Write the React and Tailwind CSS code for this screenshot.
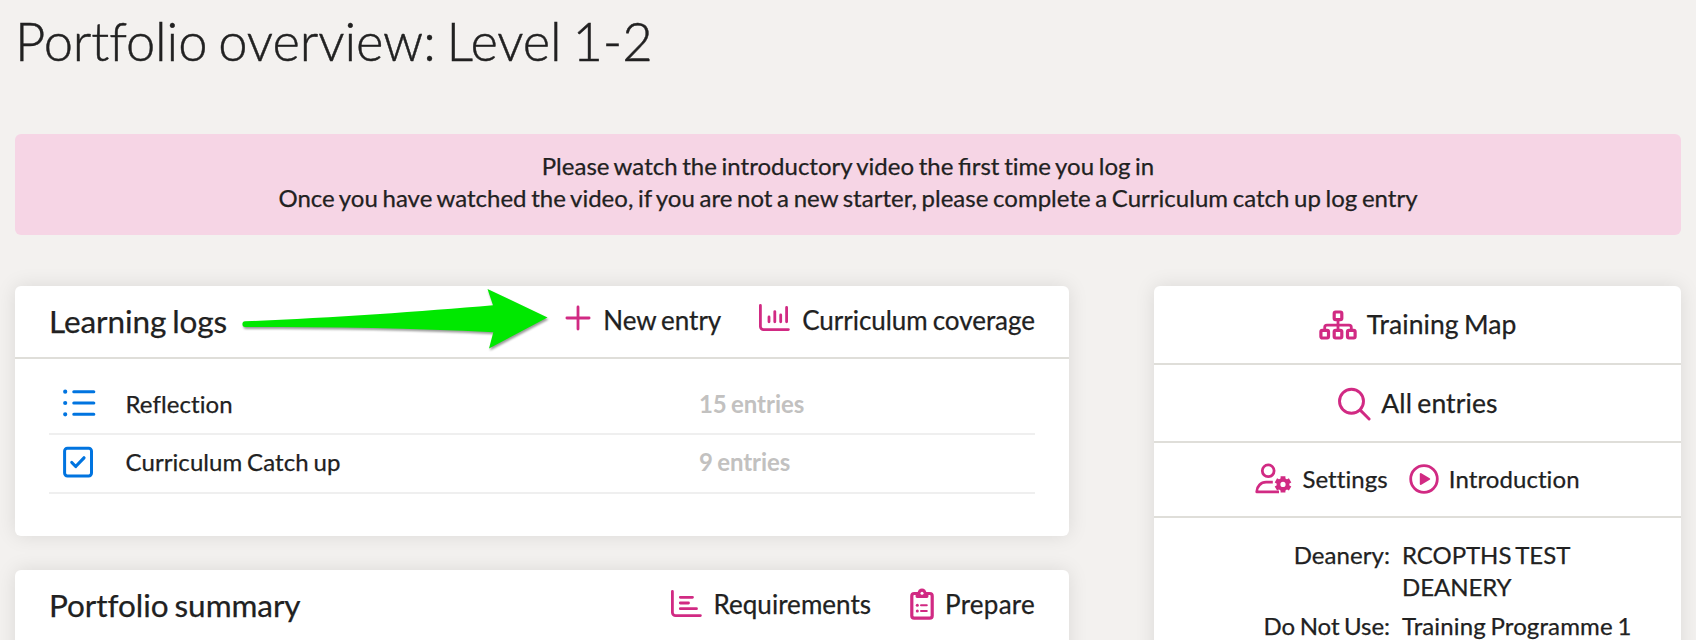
const stroke = {
  fill: "none",
  stroke: "currentColor",
  strokeWidth: 2.8,
  strokeLinecap: "round",
  strokeLinejoin: "round",
};

function PlusIcon() {
  return (
    <svg width="26" height="26" viewBox="0 0 26 26" {...stroke}>
      <path d="M13 1.9v22.2M1.9 13h22.2" />
    </svg>
  );
}

function BarsIcon() {
  return (
    <svg width="31" height="28" viewBox="0 0 31 28" {...stroke}>
      <path d="M1.4 1.4v21a3.2 3.2 0 0 0 3.2 3.2h24.8M10 13v4.8M15.8 7.6v10.2M21.7 11v6.8M27.6 3.4v14.4" />
    </svg>
  );
}

function ReportIcon() {
  return (
    <svg width="31" height="28" viewBox="0 0 31 28" {...stroke}>
      <path d="M1.4 1.4v21a3.2 3.2 0 0 0 3.2 3.2h24.8M9.3 7.3h12.2M9.3 13h8.2M9.3 18.7h16.2" />
    </svg>
  );
}

function ClipboardIcon() {
  return (
    <svg width="24" height="32" viewBox="0 0 24 32" {...stroke}>
      <rect x="1.8" y="5.5" width="20.4" height="24.6" rx="2.4" strokeWidth="3.2" />
      <path
        d="M5.6 5H18.4v3.6a1.4 1.4 0 0 1-1.4 1.4H7A1.4 1.4 0 0 1 5.6 8.6z"
        fill="currentColor"
        stroke="none"
      />
      <circle cx="12" cy="4.8" r="4.4" fill="currentColor" stroke="none" />
      <circle cx="12" cy="5.2" r="1.5" fill="#fff" stroke="none" />
      <path d="M11 17.2h5.8M11 22.9h5.8" strokeWidth="2" />
      <circle cx="7.3" cy="17.2" r="1.5" fill="currentColor" stroke="none" />
      <circle cx="7.3" cy="22.9" r="1.5" fill="currentColor" stroke="none" />
    </svg>
  );
}

function SitemapIcon() {
  return (
    <svg width="38" height="30" viewBox="0 0 38 30" {...stroke} strokeWidth="3.2">
      <rect x="15.2" y="2" width="7.6" height="7.6" rx="1.4" />
      <rect x="1.9" y="20.4" width="7.6" height="7.6" rx="1.4" />
      <rect x="15.2" y="20.4" width="7.6" height="7.6" rx="1.4" />
      <rect x="28.5" y="20.4" width="7.6" height="7.6" rx="1.4" />
      <path d="M19 10v10M5.7 20v-2.6a2.2 2.2 0 0 1 2.2-2.2h22.2a2.2 2.2 0 0 1 2.2 2.2V20" strokeWidth="2.8" />
    </svg>
  );
}

function SearchIcon() {
  return (
    <svg width="34" height="34" viewBox="0 0 34 34" {...stroke} strokeWidth="2.9">
      <circle cx="14.5" cy="14.3" r="12" />
      <path d="M23.5 23.4l8.6 8.6" />
    </svg>
  );
}

function UserGearIcon() {
  return (
    <svg width="37" height="31" viewBox="0 0 37 31" {...stroke}>
      <circle cx="13.2" cy="7.8" r="5.9" />
      <path d="M17.8 19.2H11.3a9.3 9.3 0 0 0-9.5 9.7H24" strokeLinecap="butt" />
      <path d="M28 13.2v16.4M20.9 17.3l14.2 8.2M35.1 17.3l-14.2 8.2" strokeWidth="4.8" strokeLinecap="butt" />
      <circle cx="28" cy="21.4" r="4.5" strokeWidth="3.8" fill="#fff" />
    </svg>
  );
}

function PlayIcon() {
  return (
    <svg width="30" height="30" viewBox="0 0 30 30" {...stroke}>
      <circle cx="15" cy="15" r="13.3" />
      <path d="M11.8 10.1v9.8L20.2 15z" fill="currentColor" strokeWidth="2" />
    </svg>
  );
}

function ListIcon() {
  return (
    <svg width="33" height="28" viewBox="0 0 33 28" {...stroke} strokeWidth="3.1">
      <path d="M10.8 2.7h20M10.8 14h20M10.8 25.3h20" />
      <path d="M2.2 2.7h.01M2.2 14h.01M2.2 25.3h.01" strokeWidth="4.2" />
    </svg>
  );
}

function CheckBoxIcon() {
  return (
    <svg width="30" height="32" viewBox="0 0 30 32" {...stroke} strokeWidth="3">
      <rect x="1.6" y="2.2" width="26.9" height="27.7" rx="2.8" />
      <path d="M8.8 16.5l3.9 4L21 11.8" strokeWidth="3.2" />
    </svg>
  );
}

function Arrow() {
  return (
    <svg
      width="308"
      height="64"
      viewBox="0 0 308 64"
      className="absolute left-[226px] top-0 overflow-visible drop-shadow-[1px_2px_1px_rgba(0,0,0,0.4)]"
    >
      <path
        d="M4 35.3C90 32 180 25.5 252 19.3L246.5 3L306.5 31.5L248 62.5L252.3 46.2C170 42 90 41 4 41Q1.4 41 1.4 38.1Q1.4 35.5 4 35.3Z"
        fill="#00e800"
      />
    </svg>
  );
}

const card = "bg-white rounded-[6px] shadow-[0_0_20px_rgba(0,0,0,0.1)]";

function Action({ icon, gap = "gap-[12px]", children }) {
  return (
    <div className={"flex items-center " + gap}>
      <span className="text-[#d12a83]">{icon}</span>
      <span>{children}</span>
    </div>
  );
}

function LogRow({ icon, label, count, className }) {
  return (
    <div className={"flex items-center border-b-2 border-[#efefef] pl-[14px] text-[24px] leading-[32px] tracking-[0.08px] " + className}>
      <span className="w-[62.5px] text-[#0074e0]">{icon}</span>
      <span className="w-[573.5px]">{label}</span>
      <span className="font-bold tracking-[-0.05px] text-[#c2c1c0] [-webkit-text-stroke:0px]">{count}</span>
    </div>
  );
}

export default function App() {
  return (
    <div className="h-[640px] w-[1696px] overflow-hidden bg-[#f3f1ef] px-[15px] font-['Lato',sans-serif] text-[#212121] [-webkit-text-stroke:0.25px] **:[word-spacing:-0.0625em]">
      <h1 className="h-[134px] pt-[9px] text-[52.5px] leading-[64px] font-light tracking-[-0.1px] [-webkit-text-stroke:0.45px]">
        Portfolio overview: Level 1-2
      </h1>

      <div className="h-[101px] rounded-[6px] bg-[#f6d5e5] pt-[16px] text-center text-[24px] leading-[32px] tracking-[0.01px]">
        <p>
          Please watch the introductory video the <span className="tracking-normal">first</span> time you log in
        </p>
        <p>Once you have watched the video, if you are not a new starter, please complete a Curriculum catch up log entry</p>
      </div>

      <div className="mt-[51px] flex items-start justify-between">
        <main className="flex w-[1054px] flex-col gap-[34px]">
          <section className={card + " h-[250px]"}>
            <header className="relative flex h-[73px] justify-between border-b-2 border-[#dfded9] px-[34px]">
              <h2 className="pt-[15px] text-[31.5px] leading-[40px] tracking-[-0.08px]">Learning logs</h2>
              <Arrow />
              <div className="flex h-[65px] gap-[38px] pt-[3px] text-[26px] tracking-[-0.03px]">
                <Action icon={<div className="pb-[4px]"><PlusIcon /></div>}>New entry</Action>
                <Action icon={<div className="pb-[4px]"><BarsIcon /></div>}>Curriculum coverage</Action>
              </div>
            </header>
            <div className="px-[34px] pt-[20px]">
              <LogRow
                className="h-[56px] pb-[4px]"
                icon={<div className="pb-[2px]"><ListIcon /></div>}
                label={<>Reflec<span className="tracking-[0.1px]">tion</span></>}
                count="15 entries"
              />
              <LogRow className="h-[59px] pb-[4px]" icon={<CheckBoxIcon />} label="Curriculum Catch up" count="9 entries" />
            </div>
          </section>

          <section className={card + " h-[250px]"}>
            <header className="flex h-[73px] justify-between px-[34px]">
              <h2 className="pt-[15px] text-[31.5px] leading-[40px] tracking-[-0.05px]">Portfolio summary</h2>
              <div className="flex h-[65px] gap-[39px] pt-[3px] text-[26px]">
                <Action icon={<ReportIcon />}><span className="tracking-[0.03px]">Requirements</span></Action>
                <Action gap="gap-[11px]" icon={<div className="pb-px"><ClipboardIcon /></div>}>
                  <span className="tracking-[0.25px]">Prepare</span>
                </Action>
              </div>
            </header>
          </section>
        </main>

        <aside className={card + " h-[500px] w-[527px]"}>
          <div className="flex h-[79px] justify-center border-b-2 border-[#dfded9] text-[26.5px] tracking-[0.08px]">
            <Action gap="gap-[10px]" icon={<SitemapIcon />}>Training Map</Action>
          </div>
          <div className="flex h-[78px] justify-center border-b-2 border-[#dfded9] pt-px text-[26.5px] tracking-[0.12px]">
            <Action gap="gap-[10px]" icon={<SearchIcon />}>All entries</Action>
          </div>
          <div className="flex h-[75px] justify-center gap-[21px] border-b-2 border-[#dfded9] pb-[2px] text-[24px] tracking-[0.08px]">
            <Action gap="gap-[10px]" icon={<UserGearIcon />}>Settings</Action>
            <Action gap="gap-[10px]" icon={<PlayIcon />}>Introduction</Action>
          </div>
          <dl className="grid grid-cols-[236px_240px] gap-x-[12px] gap-y-[7px] pt-[21px] text-[24px] leading-[32px] tracking-[0.05px]">
            <dt className="text-right">Deanery:</dt>
            <dd className="tracking-[-0.05px]">RCOPTHS TEST<br />DEANERY</dd>
            <dt className="text-right tracking-[-0.05px]">Do Not Use:</dt>
            <dd className="tracking-[0.12px]">Training Programme 1</dd>
          </dl>
        </aside>
      </div>
    </div>
  );
}
